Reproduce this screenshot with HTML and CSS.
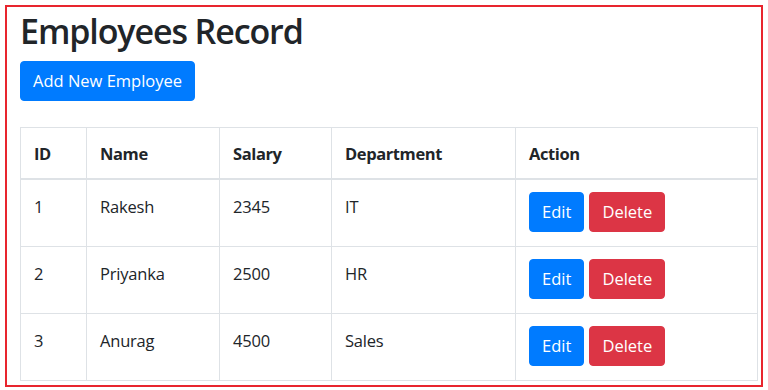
FILE: index.html
```html
<!DOCTYPE html>
<html lang="en">

<head>
    <meta charset="UTF-8">
    <meta name="viewport" content="width=device-width, initial-scale=1.0">
    <title>Employees Record</title>
    <link rel="stylesheet" href="styles.css">
</head>

<body>
    <div class="frame">
        <h1>Employees Record</h1>
        <button class="btn btn-primary add-btn">Add New Employee</button>

        <table class="records">
            <thead>
                <tr>
                    <th class="col-id">ID</th>
                    <th class="col-name">Name</th>
                    <th class="col-salary">Salary</th>
                    <th class="col-dept">Department</th>
                    <th>Action</th>
                </tr>
            </thead>
            <tbody>
                <tr>
                    <td>1</td>
                    <td>Rakesh</td>
                    <td>2345</td>
                    <td>IT</td>
                    <td class="actions">
                        <button class="btn btn-primary">Edit</button>
                        <button class="btn btn-danger">Delete</button>
                    </td>
                </tr>
                <tr>
                    <td>2</td>
                    <td>Priyanka</td>
                    <td>2500</td>
                    <td>HR</td>
                    <td class="actions">
                        <button class="btn btn-primary">Edit</button>
                        <button class="btn btn-danger">Delete</button>
                    </td>
                </tr>
                <tr>
                    <td>3</td>
                    <td>Anurag</td>
                    <td>4500</td>
                    <td>Sales</td>
                    <td class="actions">
                        <button class="btn btn-primary">Edit</button>
                        <button class="btn btn-danger">Delete</button>
                    </td>
                </tr>
            </tbody>
        </table>
    </div>
</body>

</html>
```

FILE: styles.css
```css
body {
    margin: 0;
    font-family: "Open Sans", "Noto Sans", sans-serif;
    color: #212529;
    background-color: #fff;
}

.frame {
    margin: 5px;
    height: 378px;
    border: 2px solid #e8252e;
    padding: 0 4px 0 13px;
}

h1 {
    margin: 3px 0 9px;
    font-size: 34px;
    font-weight: 600;
    line-height: 42px;
    letter-spacing: -1.1px;
}

.btn {
    display: inline-block;
    font-family: inherit;
    font-size: 16.5px;
    line-height: 24px;
    letter-spacing: 0;
    padding: 7px 12px;
    border: 1px solid transparent;
    border-radius: 4px;
    color: #fff;
    cursor: pointer;
}

.btn-primary {
    background-color: #007bff;
    border-color: #007bff;
}

.btn-danger {
    background-color: #dc3545;
    border-color: #dc3545;
}

.add-btn {
    margin-bottom: 26px;
}

.records {
    width: 738px;
    table-layout: fixed;
    border-collapse: collapse;
    font-size: 16.5px;
    line-height: 25px;
    letter-spacing: -0.2px;
}

.records th,
.records td {
    border: 1px solid #dee2e6;
    padding: 14px 13px 11px;
    text-align: left;
    vertical-align: top;
}

.records th {
    font-weight: 700;
    padding-top: 13px;
    padding-bottom: 12px;
    letter-spacing: -0.4px;
    border-bottom-width: 2px;
}

.records td {
    height: 41px;
}

.records td.actions {
    white-space: nowrap;
    padding-top: 12px;
    padding-bottom: 13px;
}

.actions .btn-primary {
    margin-right: 1px;
}

.col-id {
    width: 39px;
}

.col-name {
    width: 106px;
}

.col-salary {
    width: 85px;
}

.col-dept {
    width: 157px;
}
```
